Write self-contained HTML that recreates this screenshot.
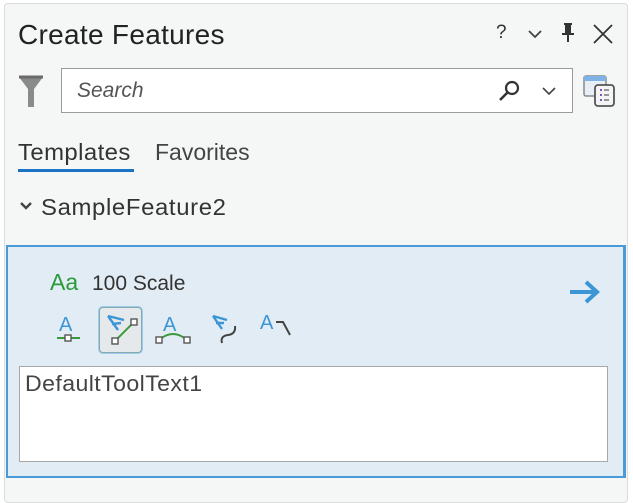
<!DOCTYPE html>
<html><head><meta charset="utf-8"><style>
*{margin:0;padding:0;box-sizing:border-box}
body{width:633px;height:494px;background:#fff;font-family:"Liberation Sans",sans-serif;position:relative;overflow:hidden}
.panel{position:absolute;left:4px;top:3px;width:624px;height:500px;background:#f5f6f6;border:1px solid #dcdcdc;border-radius:4px}
.abs{position:absolute}
.t{color:#2b2b2b;white-space:nowrap}
</style></head><body>
<div class="panel"></div>
<div class="abs t" style="left:18px;top:19px;font-size:28px;color:#222;letter-spacing:0.3px">Create Features</div>
<div class="abs t" style="left:496px;top:22px;font-size:19px;color:#333">?</div>
<svg class="abs" style="left:527px;top:28px" width="16" height="12"><path d="M2 3 L8 9 L14 3" stroke="#444" stroke-width="1.8" fill="none"/></svg>
<svg class="abs" style="left:558px;top:22px" width="20" height="22"><path d="M6 2 H14" stroke="#333" stroke-width="2" fill="none"/><rect x="7" y="2" width="6" height="10" fill="#333"/><path d="M4 12 H16 M10 12 V20" stroke="#333" stroke-width="2" fill="none"/></svg>
<svg class="abs" style="left:592px;top:23px" width="22" height="22"><path d="M2 2 L20 20 M20 2 L2 20" stroke="#333" stroke-width="1.8" fill="none"/></svg>
<svg class="abs" style="left:17px;top:75px" width="28" height="34"><path d="M2 2 H26 L17 14 V32 H11 V14 Z" fill="#8a8a8a"/><path d="M2 2 H26" stroke="#6a6a6a" stroke-width="3"/></svg>
<div class="abs" style="left:61px;top:68px;width:512px;height:45px;background:#fff;border:1px solid #9a9a9a"></div>
<div class="abs t" style="left:77px;top:79px;font-size:21px;font-style:italic;color:#555">Search</div>
<svg class="abs" style="left:497px;top:79px" width="26" height="26"><circle cx="15" cy="9" r="6" stroke="#333" stroke-width="2.2" fill="none"/><path d="M11 13 L3 21" stroke="#333" stroke-width="2.6"/></svg>
<svg class="abs" style="left:541px;top:86px" width="16" height="12"><path d="M2 2 L8 8 L14 2" stroke="#444" stroke-width="1.6" fill="none"/></svg>
<svg class="abs" style="left:583px;top:74px" width="34" height="34"><rect x="1" y="2" width="22" height="20" rx="2" fill="#e8eef6" stroke="#888" stroke-width="1.5"/><rect x="1" y="2" width="22" height="5" fill="#7fb2e5"/><rect x="12" y="11" width="19" height="21" rx="3" fill="#f4f4f4" stroke="#555" stroke-width="1.8"/><path d="M17 16h2M17 21h2M17 26h2" stroke="#7a55c8" stroke-width="2"/><path d="M21 16h5M21 21h5M21 26h5" stroke="#777" stroke-width="1.5"/></svg>
<div class="abs t" style="left:18px;top:139px;font-size:23px;color:#333;letter-spacing:0.4px;transform:scaleX(1.04);transform-origin:left">Templates</div>
<div class="abs" style="left:18px;top:169px;width:116px;height:3px;background:#1a73c6"></div>
<div class="abs t" style="left:155px;top:139px;font-size:23px;color:#444">Favorites</div>
<svg class="abs" style="left:19px;top:201px" width="14" height="10"><path d="M2 2 L7 7 L12 2" stroke="#444" stroke-width="2.4" fill="none"/></svg>
<div class="abs t" style="left:41px;top:194px;font-size:23px;color:#333;letter-spacing:0.6px;transform:scaleX(1.04);transform-origin:left">SampleFeature2</div>
<div class="abs" style="left:6px;top:245px;width:620px;height:233px;background:#e2ecf4;border:2px solid #4a9ad8;border-right-width:3px"></div>
<div class="abs t" style="left:50px;top:269px;font-size:23px;color:#2a9a3a">Aa</div>
<div class="abs t" style="left:92px;top:272px;font-size:21px;color:#333">100 Scale</div>
<svg class="abs" style="left:568px;top:278px" width="36" height="28"><path d="M2 14 H28 M18 4 L29 14 L18 24" stroke="#3c96d6" stroke-width="4" fill="none"/></svg>
<div class="abs" style="left:99px;top:307px;width:43px;height:46px;background:#e6e9ec;border:1px solid #8aa;border-radius:4px;box-shadow:0 0 0 1px #9ccbf0"></div>
<svg class="abs" style="left:50px;top:310px" width="250" height="40">
<g font-family="Liberation Sans" font-size="20" fill="#3c96d6">
<text x="9" y="21">A</text><text x="113" y="21">A</text><text x="210" y="19">A</text>
</g>
<path d="M7 28 H30" stroke="#3a9a3a" stroke-width="2"/><rect x="15" y="25" width="6" height="6" fill="#fff" stroke="#555" stroke-width="1.4"/>
<path d="M58 6 L68 20 M58 6 L74 10 M62 14 L71 13" stroke="#3c96d6" stroke-width="2.4" fill="none"/>
<path d="M65 31 L84 12" stroke="#3a9a3a" stroke-width="2"/><rect x="62" y="28" width="6" height="6" fill="#fff" stroke="#555" stroke-width="1.4"/><rect x="81" y="9" width="6" height="6" fill="#fff" stroke="#555" stroke-width="1.4"/>
<path d="M109 30 Q123 18 137 30" stroke="#3a9a3a" stroke-width="2" fill="none"/><rect x="106" y="27" width="6" height="6" fill="#fff" stroke="#555" stroke-width="1.4"/><rect x="134" y="27" width="6" height="6" fill="#fff" stroke="#555" stroke-width="1.4"/>
<path d="M163 6 L172 19 M163 6 L177 10 M166 13 L174 13" stroke="#3c96d6" stroke-width="2.4" fill="none"/>
<path d="M172 33 Q170 26 178 25 Q186 24 185 16" stroke="#444" stroke-width="2" fill="none"/>
<path d="M226 12 H233 L240 25" stroke="#444" stroke-width="2" fill="none"/>
</svg>
<div class="abs" style="left:19px;top:366px;width:589px;height:96px;background:#fff;border:1px solid #a8a8a8"></div>
<div class="abs t" style="left:25px;top:371px;font-size:22px;color:#444;letter-spacing:0.4px;transform:scaleX(1.05);transform-origin:left">DefaultToolText1</div>
</body></html>
